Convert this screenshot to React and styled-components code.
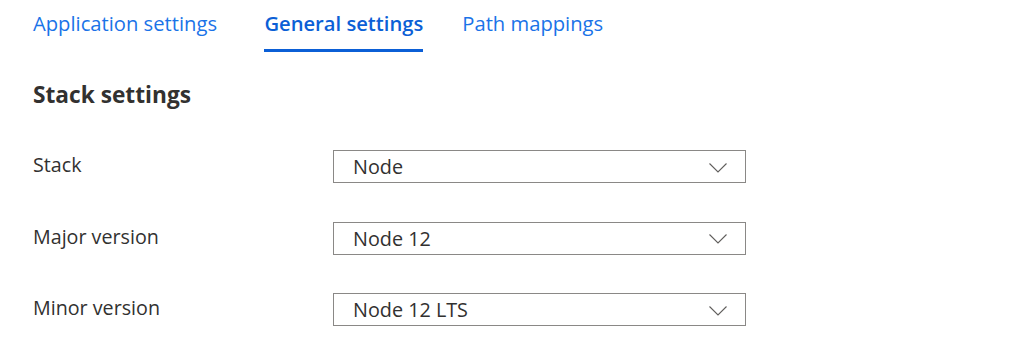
import React, { useState } from "react";
import styled, { createGlobalStyle } from "styled-components";

const GlobalStyle = createGlobalStyle`
  html, body {
    margin: 0;
    padding: 0;
    background: #ffffff;
  }
  body {
    font-family: "Open Sans", "Noto Sans", sans-serif;
    color: #323130;
  }
`;

const Page = styled.div`
  padding: 0 0 0 33px;
  width: 1009px;
  height: 344px;
  box-sizing: border-box;
  overflow: hidden;
`;

const TabBar = styled.div`
  display: flex;
  gap: 39px;
`;

// width is reserved for the bold text, so tabs don't shift on selection
const Tab = styled.button`
  display: flex;
  flex-direction: column;
  align-items: flex-start;
  padding: 9px 0 12px;
  border: none;
  border-bottom: 3px solid ${({ active }) => (active ? "#0b5fd6" : "transparent")};
  background: none;
  cursor: pointer;
  font-family: inherit;
  font-size: 20.2px;
  line-height: 28px;
  font-weight: ${({ active }) => (active ? 600 : 400)};
  color: ${({ active }) => (active ? "#0b5fd6" : "#1a73e8")};
  white-space: nowrap;

  &::after {
    content: attr(data-text);
    font-weight: 600;
    height: 0;
    overflow: hidden;
    visibility: hidden;
  }
`;

const SectionTitle = styled.h2`
  margin: 29px 0 0;
  font-size: 22.7px;
  line-height: 28px;
  font-weight: 700;
  color: #323130;
`;

const Form = styled.div`
  display: flex;
  flex-direction: column;
  gap: 38.5px;
  margin-top: 41px;
`;

const Row = styled.div`
  display: grid;
  grid-template-columns: 300px 413px;
  align-items: center;
`;

const Label = styled.label`
  font-size: 19.7px;
  line-height: 26px;
  color: #323130;
  margin-top: -3px;
`;

const SelectBox = styled.div`
  display: flex;
  align-items: center;
  justify-content: space-between;
  height: 33px;
  box-sizing: border-box;
  border: 1px solid #8a8886;
  padding: 0 18px 0 19px;
  font-size: 19.8px;
  color: #323130;
  cursor: pointer;
`;

const Chevron = () => (
  <svg width="18" height="10" viewBox="0 0 18 10" style={{ marginTop: 2 }}>
    <polyline
      points="0.5,0.5 9,9 17.5,0.5"
      fill="none"
      stroke="#605e5c"
      strokeWidth="1.1"
    />
  </svg>
);

const tabs = ["Application settings", "General settings", "Path mappings"];

const fields = [
  { label: "Stack", value: "Node" },
  { label: "Major version", value: "Node 12" },
  { label: "Minor version", value: "Node 12 LTS" },
];

const App = () => {
  const [selected, setSelected] = useState("General settings");

  return (
    <>
      <GlobalStyle />
      <Page>
        <TabBar>
          {tabs.map((t) => (
            <Tab
              key={t}
              data-text={t}
              active={selected === t}
              onClick={() => setSelected(t)}
            >
              {t}
            </Tab>
          ))}
        </TabBar>
        <SectionTitle>Stack settings</SectionTitle>
        <Form>
          {fields.map((f) => (
            <Row key={f.label}>
              <Label>{f.label}</Label>
              <SelectBox>
                <span>{f.value}</span>
                <Chevron />
              </SelectBox>
            </Row>
          ))}
        </Form>
      </Page>
    </>
  );
};

export default App;
